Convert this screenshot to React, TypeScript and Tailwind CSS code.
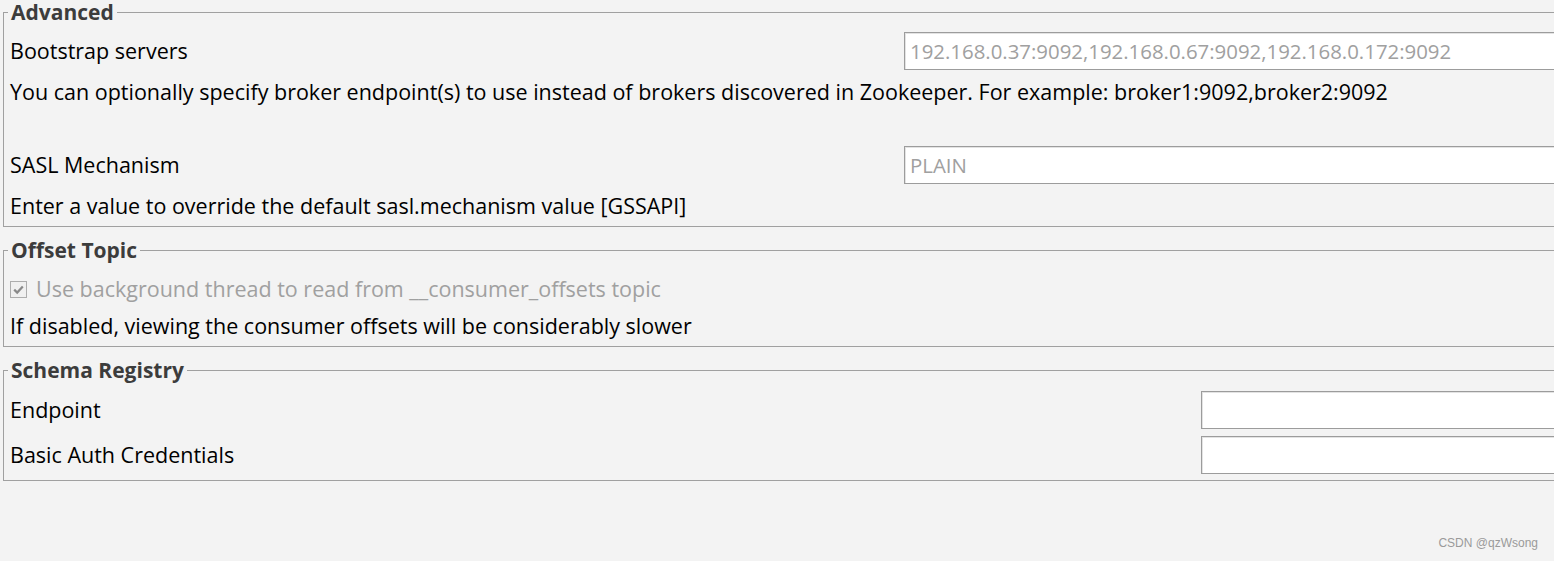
import React from 'react';

const font = { fontFamily: '"Open Sans", "Noto Sans", sans-serif' };

const Group = ({ title, className, children }: { title: string; className?: string; children: React.ReactNode }) => (
  <fieldset className={`ml-[3px] border-l border-t border-b border-[#a0a0a0] ${className || ''}`}>
    <legend className="ml-[4px] px-[3px] text-[21px] leading-[24px] font-bold text-[#3c3c3c]">{title}</legend>
    <div className="pl-[6px]">{children}</div>
  </fieldset>
);

const Field = ({ label, value, labelWidth }: { label: string; value?: string; labelWidth: string }) => (
  <div className="flex h-[38px] items-center">
    <div className={`${labelWidth} shrink-0 text-black`}>{label}</div>
    <div className="flex h-full flex-1 items-center border border-r-0 border-[#9c9c9c] bg-white pl-[5px] text-[20.4px] text-[#a0a0a0] shadow-[inset_1px_1px_0_#e3e3e3]">
      {value}
    </div>
  </div>
);

export default function App() {
  return (
    <div className="h-[561px] w-full overflow-hidden bg-[#f3f3f3] text-[21.5px] leading-[30px]" style={font}>
      <Group title="Advanced">
        <div className="pt-[8px] pb-[5px]">
          <Field label="Bootstrap servers" value="192.168.0.37:9092,192.168.0.67:9092,192.168.0.172:9092" labelWidth="w-[894px]" />
          <div className="mt-[7px] whitespace-nowrap text-black">
            You can optionally specify broker endpoint(s) to use instead of brokers discovered in Zookeeper. For example: broker1:9092,broker2:9092
          </div>
          <div className="mt-[39px]">
            <Field label="SASL Mechanism" value="PLAIN" labelWidth="w-[894px]" />
          </div>
          <div className="mt-[7px] text-black">Enter a value to override the default sasl.mechanism value [GSSAPI]</div>
        </div>
      </Group>

      <Group title="Offset Topic" className="mt-[11px]">
        <div className="pt-[12px] pb-[5px]">
          <div className="flex items-center">
            <span className="flex h-[17px] w-[17px] items-center justify-center border border-[#adadad] bg-[#f0f0f0]">
              <svg width="13" height="13" viewBox="0 0 13 13">
                <path d="M2.2 6.6 L5.2 9.6 L10.8 3.4" fill="none" stroke="#8a8a8a" strokeWidth="2.2" />
              </svg>
            </span>
            <span className="ml-[9px] text-[#a0a0a0]">Use background thread to read from __consumer_offsets topic</span>
          </div>
          <div className="mt-[7px] text-black">If disabled, viewing the consumer offsets will be considerably slower</div>
        </div>
      </Group>

      <Group title="Schema Registry" className="mt-[11px]">
        <div className="pt-[9px] pb-[6px]">
          <Field label="Endpoint" labelWidth="w-[1191px]" />
          <div className="mt-[7px]">
            <Field label="Basic Auth Credentials" labelWidth="w-[1191px]" />
          </div>
        </div>
      </Group>

      <div className="mt-[54px] flex justify-end pr-[16px]">
        <span className="text-[12px] leading-[16px] text-[#9a9a9a]" style={{ fontFamily: '"Liberation Sans", Arial, sans-serif' }}>
          CSDN @qzWsong
        </span>
      </div>
    </div>
  );
}
